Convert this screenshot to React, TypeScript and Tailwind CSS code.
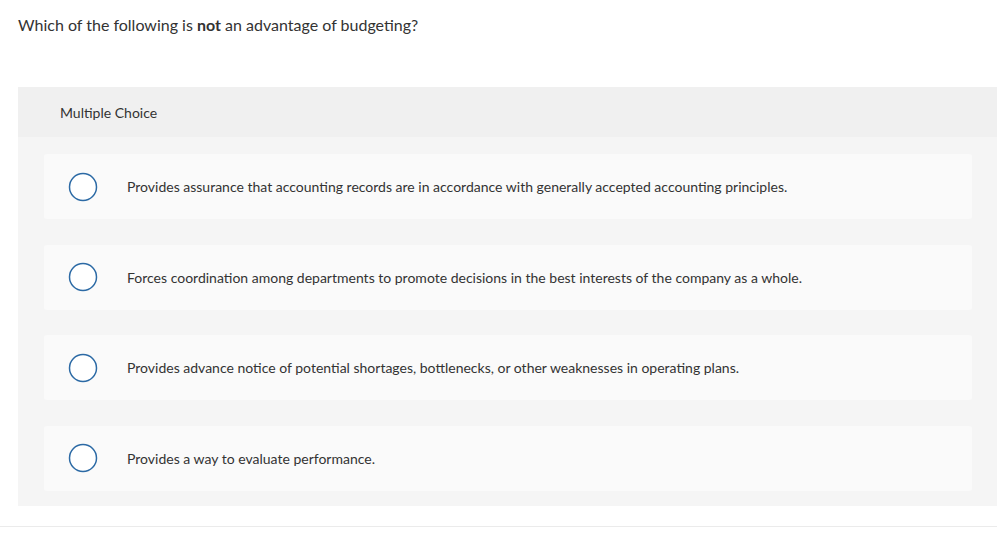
const OPTIONS = [
  "Provides assurance that accounting records are in accordance with generally accepted accounting principles.",
  "Forces coordination among departments to promote decisions in the best interests of the company as a whole.",
  "Provides advance notice of potential shortages, bottlenecks, or other weaknesses in operating plans.",
  "Provides a way to evaluate performance.",
];

const Radio = () => (
  <svg width="30" height="30" viewBox="0 0 30 30" className="shrink-0">
    <circle cx="15" cy="15" r="13.5" fill="#fff" stroke="#2c6aa5" strokeWidth="1.5" />
  </svg>
);

export default function App() {
  return (
    <div className="min-h-[534px] bg-white font-['Lato',sans-serif] text-[#333]">
      <p className="pl-[18px] pt-[15px] text-[16px] leading-5">
        Which of the following is <strong className="font-bold">not</strong> an advantage of budgeting?
      </p>

      <section className="ml-[18px] mt-[52px] bg-[#f5f5f5]">
        <div className="flex h-[50px] items-center bg-[#f0f0f0] pl-[42px] text-[14px]">
          Multiple Choice
        </div>
        <div className="flex flex-col gap-[25.6px] pb-[15px] pl-[26px] pr-[25px] pt-[17px]">
          {OPTIONS.map((opt) => (
            <div key={opt} className="flex h-[65px] items-center rounded-[3px] bg-[#fafafa] pl-[24px]">
              <Radio />
              <span className="ml-[29px] text-[14px]">{opt}</span>
            </div>
          ))}
        </div>
      </section>

      <div className="mt-[20px] h-px bg-[#ebebeb]" />
    </div>
  );
}
